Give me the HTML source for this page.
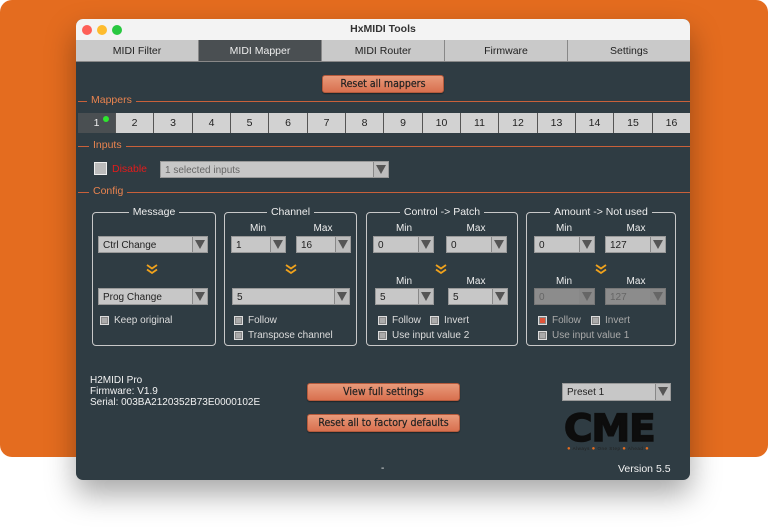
<!DOCTYPE html>
<html><head><meta charset="utf-8"><style>
*{margin:0;padding:0;box-sizing:border-box}
body{width:768px;height:532px;background:#fff;position:relative;overflow:hidden;font-family:"Liberation Sans",Arial,sans-serif;font-size:10px;color:#eee}
.a{position:absolute}
#org{left:0;top:0;width:768px;height:457px;background:#e46c1f;border-radius:12px}
#win{left:76px;top:19px;width:614px;height:461px;background:#2f3c43;border-radius:7px;overflow:hidden;box-shadow:0 14px 30px rgba(0,0,0,.35)}
#tb{left:0;top:0;width:614px;height:21px;background:#f3f3f3;text-align:center;font-weight:bold;color:#333;font-size:10.5px;line-height:21px}
.dot{top:6px;width:10px;height:10px;border-radius:50%}
.tab{top:21px;height:22px;background:#c9c9c9;color:#222;text-align:center;line-height:22px;font-size:10.5px;border-right:1px solid #888;border-bottom:1px solid #888}
.tab.on{background:#4a4f52;color:#eee}
.btn{background:linear-gradient(#e99a7a,#d9704f);border:1px solid #b55a3c;border-radius:3px;color:#222;text-align:center;font-size:10.5px;font-family:"DejaVu Sans Condensed","Liberation Sans",sans-serif;box-shadow:0 1px 1px rgba(0,0,0,.4);-webkit-text-stroke:0.2px #222}
.sec{color:#e8834f;font-size:10.5px;background:#2f3c43;padding:0 4px}
.line{height:1px;background:#c8603a}
.mb{top:94px;height:20px;background:#d2d2d2;color:#222;text-align:center;line-height:20px;font-size:10.5px;border-right:1px solid #555}
.sel{height:17px;background:#c7c7c7;color:#222;font-size:10px;line-height:17px;padding-left:4px;border:1px solid #999}
.sel .ar{position:absolute;right:0;top:0;width:15px;height:15px;border-left:1px solid #888;background:#bdbdbd}
.sel .ar:after{content:"";position:absolute;left:2px;top:3px;border-left:5.5px solid transparent;border-right:5.5px solid transparent;border-top:9px solid #555}
.sel.dis{background:#8c8c8c;color:#666;border-color:#777}
.sel.dis .ar{background:#888}.sel.dis .ar:after{border-top-color:#666}
.box{border:1.5px solid #c8c8c8;border-radius:4px}
.bt{top:-7px;left:0;right:0;text-align:center;font-size:10.5px;color:#eee}
.bt span{background:#2f3c43;padding:0 4px}
.lab{font-size:10px;color:#eee;text-align:center;width:40px}
.cb{width:9px;height:9px;background:#aaa;border:1px solid #ddd;box-shadow:inset 0 0 0 1px #888}
.ct{font-size:10px;color:#ddd}
</style></head><body>
<div id="org" class="a"></div>
<div id="win" class="a">
 <div id="tb" class="a">HxMIDI Tools</div>
 <div class="a dot" style="left:6px;background:#fe5f57"></div>
 <div class="a dot" style="left:21px;background:#febc2e"></div>
 <div class="a dot" style="left:36px;background:#28c840"></div>
 <div class="a tab" style="left:0;width:123px">MIDI Filter</div>
 <div class="a tab on" style="left:123px;width:123px">MIDI Mapper</div>
 <div class="a tab" style="left:246px;width:123px">MIDI Router</div>
 <div class="a tab" style="left:369px;width:123px">Firmware</div>
 <div class="a tab" style="left:492px;width:122px;border-right:none">Settings</div>

 <div class="a btn" style="left:246px;top:56px;width:122px;height:18px;line-height:16px">Reset all mappers</div>

 <div class="a line" style="left:2px;top:82px;width:612px"></div>
 <div class="a sec" style="left:11px;top:75px">Mappers</div>
 <div class="a mb" style="left:2px;width:38px;background:#4a4f52;color:#eee">1<span style="position:absolute;left:25px;top:3px;width:6px;height:6px;border-radius:50%;background:#2ee62e"></span></div>
 <div class="a mb" style="left:40px;width:38px">2</div>
 <div class="a mb" style="left:78px;width:39px">3</div>
 <div class="a mb" style="left:117px;width:38px">4</div>
 <div class="a mb" style="left:155px;width:38px">5</div>
 <div class="a mb" style="left:193px;width:39px">6</div>
 <div class="a mb" style="left:232px;width:38px">7</div>
 <div class="a mb" style="left:270px;width:38px">8</div>
 <div class="a mb" style="left:308px;width:39px">9</div>
 <div class="a mb" style="left:347px;width:38px">10</div>
 <div class="a mb" style="left:385px;width:38px">11</div>
 <div class="a mb" style="left:423px;width:39px">12</div>
 <div class="a mb" style="left:462px;width:38px">13</div>
 <div class="a mb" style="left:500px;width:38px">14</div>
 <div class="a mb" style="left:538px;width:39px">15</div>
 <div class="a mb" style="left:577px;width:37px;border-right:none">16</div>

 <div class="a line" style="left:2px;top:127px;width:612px"></div>
 <div class="a sec" style="left:13px;top:120px">Inputs</div>
 <div class="a" style="left:18px;top:143px;width:13px;height:13px;background:#bbb;border:1px solid #eee"></div>
 <div class="a" style="left:36px;top:144px;color:#e41b1b;font-size:10.5px">Disable</div>
 <div class="a sel" style="left:84px;top:142px;width:229px;height:17px;color:#666">1 selected inputs<div class="ar"></div></div>

 <div class="a line" style="left:2px;top:173px;width:612px"></div>
 <div class="a sec" style="left:13px;top:166px">Config</div>

 <!-- Message -->
 <div class="a box" style="left:16px;top:193px;width:124px;height:134px">
  <div class="a bt"><span>Message</span></div>
 </div>
 <div class="a sel" style="left:22px;top:217px;width:110px">Ctrl Change<div class="ar"></div></div>
 <svg class="a" style="left:70px;top:245px" width="12" height="10"><path d="M1 1 L6 4.5 L11 1 M1 5.5 L6 9 L11 5.5" fill="none" stroke="#f0a21c" stroke-width="1.8"/></svg>
 <div class="a sel" style="left:22px;top:269px;width:110px">Prog Change<div class="ar"></div></div>
 <div class="a cb" style="left:24px;top:297px"></div><div class="a ct" style="left:38px;top:296px">Keep original</div>

 <!-- Channel -->
 <div class="a box" style="left:148px;top:193px;width:133px;height:134px">
  <div class="a bt"><span>Channel</span></div>
 </div>
 <div class="a lab" style="left:162px;top:204px">Min</div>
 <div class="a lab" style="left:227px;top:204px">Max</div>
 <div class="a sel" style="left:155px;top:217px;width:55px">1<div class="ar"></div></div>
 <div class="a sel" style="left:220px;top:217px;width:55px">16<div class="ar"></div></div>
 <svg class="a" style="left:209px;top:245px" width="12" height="10"><path d="M1 1 L6 4.5 L11 1 M1 5.5 L6 9 L11 5.5" fill="none" stroke="#f0a21c" stroke-width="1.8"/></svg>
 <div class="a sel" style="left:156px;top:269px;width:118px">5<div class="ar"></div></div>
 <div class="a cb" style="left:158px;top:297px"></div><div class="a ct" style="left:172px;top:296px">Follow</div>
 <div class="a cb" style="left:158px;top:312px"></div><div class="a ct" style="left:172px;top:311px">Transpose channel</div>

 <!-- Control -->
 <div class="a box" style="left:290px;top:193px;width:152px;height:134px">
  <div class="a bt"><span>Control -&gt; Patch</span></div>
 </div>
 <div class="a lab" style="left:308px;top:204px">Min</div>
 <div class="a lab" style="left:380px;top:204px">Max</div>
 <div class="a sel" style="left:297px;top:217px;width:61px">0<div class="ar"></div></div>
 <div class="a sel" style="left:370px;top:217px;width:61px">0<div class="ar"></div></div>
 <svg class="a" style="left:359px;top:245px" width="12" height="10"><path d="M1 1 L6 4.5 L11 1 M1 5.5 L6 9 L11 5.5" fill="none" stroke="#f0a21c" stroke-width="1.8"/></svg>
 <div class="a lab" style="left:308px;top:257px">Min</div>
 <div class="a lab" style="left:380px;top:257px">Max</div>
 <div class="a sel" style="left:299px;top:269px;width:59px">5<div class="ar"></div></div>
 <div class="a sel" style="left:372px;top:269px;width:60px">5<div class="ar"></div></div>
 <div class="a cb" style="left:302px;top:297px"></div><div class="a ct" style="left:316px;top:296px">Follow</div>
 <div class="a cb" style="left:354px;top:297px"></div><div class="a ct" style="left:368px;top:296px">Invert</div>
 <div class="a cb" style="left:302px;top:312px"></div><div class="a ct" style="left:316px;top:311px">Use input value 2</div>

 <!-- Amount -->
 <div class="a box" style="left:450px;top:193px;width:150px;height:134px">
  <div class="a bt"><span>Amount -&gt; Not used</span></div>
 </div>
 <div class="a lab" style="left:468px;top:204px">Min</div>
 <div class="a lab" style="left:540px;top:204px">Max</div>
 <div class="a sel" style="left:458px;top:217px;width:61px">0<div class="ar"></div></div>
 <div class="a sel" style="left:529px;top:217px;width:61px">127<div class="ar"></div></div>
 <svg class="a" style="left:519px;top:245px" width="12" height="10"><path d="M1 1 L6 4.5 L11 1 M1 5.5 L6 9 L11 5.5" fill="none" stroke="#f0a21c" stroke-width="1.8"/></svg>
 <div class="a lab" style="left:468px;top:257px">Min</div>
 <div class="a lab" style="left:540px;top:257px">Max</div>
 <div class="a sel dis" style="left:458px;top:269px;width:61px">0<div class="ar"></div></div>
 <div class="a sel dis" style="left:529px;top:269px;width:61px">127<div class="ar"></div></div>
 <div class="a cb" style="left:462px;top:297px;background:#e0553a"></div><div class="a ct" style="left:476px;top:296px;color:#aaa">Follow</div>
 <div class="a cb" style="left:515px;top:297px"></div><div class="a ct" style="left:529px;top:296px;color:#aaa">Invert</div>
 <div class="a cb" style="left:462px;top:312px"></div><div class="a ct" style="left:476px;top:311px;color:#aaa">Use input value 1</div>

 <!-- bottom -->
 <div class="a" style="left:14px;top:356px;font-size:10px;line-height:11px;color:#f2f2f2">H2MIDI Pro<br>Firmware: V1.9<br>Serial: 003BA2120352B73E0000102E</div>
 <div class="a btn" style="left:231px;top:364px;width:153px;height:18px;line-height:16px">View full settings</div>
 <div class="a btn" style="left:231px;top:395px;width:153px;height:18px;line-height:16px">Reset all to factory defaults</div>
 <div class="a sel" style="left:486px;top:364px;width:109px;height:18px">Preset 1<div class="ar" style="height:16px"></div></div>
 <div class="a" style="left:488px;top:393px;width:104px;height:34px;font:900 37px/34px 'DejaVu Sans','Liberation Sans',sans-serif;color:#0d0d0d;letter-spacing:-1px;transform:scaleX(1.05);transform-origin:left;-webkit-text-stroke:1.5px #0d0d0d">CME</div>
 <div class="a" style="left:491px;top:427px;font-size:4.5px;color:#222;letter-spacing:.5px"><span style="color:#e46c1f;font-size:6px">●</span> Always <span style="color:#e46c1f;font-size:6px">●</span> One  Step <span style="color:#e46c1f;font-size:6px">●</span> Ahead <span style="color:#e46c1f;font-size:6px">●</span></div>
 <div class="a" style="left:305px;top:444px;font-size:10px">-</div>
 <div class="a" style="left:542px;top:444px;font-size:10.5px;color:#f2f2f2">Version 5.5</div>
</div>
</body></html>
